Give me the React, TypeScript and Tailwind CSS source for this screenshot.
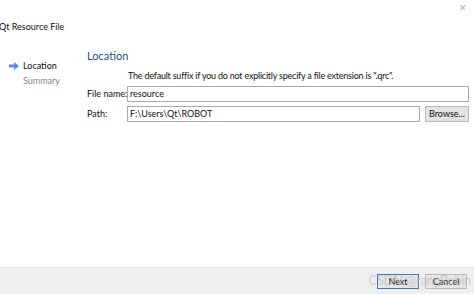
import React from 'react';

export default function App() {
  return (
    <div className="w-[474px] h-[294px] bg-white flex flex-col overflow-hidden text-[9px] text-[#111]" style={{ fontFamily: 'Lato, "Noto Sans", sans-serif' }}>
      <div className="h-[20px] flex justify-end items-start pr-[7px] pt-[3px]">
        <span className="text-[#aaa] text-[9px] leading-none">✕</span>
      </div>
      <div className="ml-[-1px] h-[14px] leading-[14px] text-[9px] whitespace-nowrap">Qt Resource File</div>

      <div className="flex flex-1 pt-[15px]">
        <div className="w-[87px] shrink-0 pl-[9px] pt-[11px] flex flex-col gap-[3px]">
          <div className="flex items-center gap-[4px] h-[12px]">
            <svg width="10" height="8" viewBox="0 0 10 8">
              <path d="M0 2.5 H5 V0 L10 4 L5 8 V5.5 H0 Z" fill="#5b8fd6" />
            </svg>
            <span>Location</span>
          </div>
          <div className="pl-[14px] text-[#888] h-[12px] leading-[12px]">Summary</div>
        </div>

        <div className="flex-1 pr-[5px]">
          <div className="text-[11px] text-[#1f4f8f] leading-[14px]">Location</div>
          <div className="pl-[41px] mt-[7px] leading-[12px] whitespace-nowrap tracking-[-0.22px]">
            The default suffix if you do not explicitly specify a file extension is ".qrc".
          </div>
          <div className="flex items-center mt-[4px] h-[16px]">
            <span className="w-[40px] shrink-0 whitespace-nowrap">File name:</span>
            <div className="flex-1 h-[16px] border border-[#aaa] px-[2px] leading-[14px]">resource</div>
          </div>
          <div className="flex items-center mt-[4px] h-[16px]">
            <span className="w-[40px] shrink-0 whitespace-nowrap">Path:</span>
            <div className="flex-1 h-[16px] border border-[#aaa] px-[2px] leading-[14px]">F:\Users\Qt\ROBOT</div>
            <div className="ml-[5px] w-[44px] shrink-0 h-[16px] border border-[#bbb] bg-[#e3e3e3] text-center leading-[14px]">Browse...</div>
          </div>
        </div>
      </div>

      <div className="relative h-[27px] bg-[#efefef] border-t border-[#e4e4e4] flex justify-end items-center gap-[6px] pr-[7px]">
        <div className="w-[42px] h-[15px] border border-[#3b79d0] bg-[#e6e6e6] text-center leading-[13px]">Next</div>
        <div className="w-[42px] h-[15px] border border-[#bbb] bg-[#e6e6e6] text-center leading-[13px]">Cancel</div>
        <div className="absolute right-[3px] top-[6px] text-[13px] text-[#b4b4b4]/60 leading-none tracking-tight pointer-events-none whitespace-nowrap">CSDN @rangRobin</div>
      </div>
    </div>
  );
}
